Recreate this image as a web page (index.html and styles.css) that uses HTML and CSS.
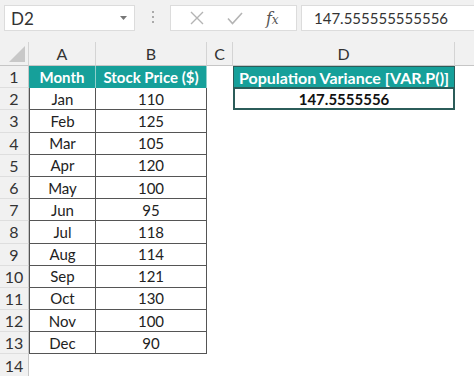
FILE: index.html
```html
<!DOCTYPE html>
<html lang="en">
<head>
  <meta charset="UTF-8" />
  <title>VAR.P example</title>
  <link rel="stylesheet" href="styles.css">
</head>
<body>

  <div class="formula-bar">
    <div class="name-box">
      <span>D2</span>
      <svg class="caret" width="7" height="4" viewBox="0 0 7 4"><polygon points="0,0 7,0 3.5,4" fill="#777"/></svg>
    </div>
    <div class="grip"><i></i><i></i><i></i></div>
    <div class="fx-buttons">
      <svg width="14" height="14" viewBox="0 0 14 14"><path d="M1 1 L13 13 M13 1 L1 13" stroke="#b4b4b4" stroke-width="1.4" fill="none"/></svg>
      <svg width="16" height="13" viewBox="0 0 16 13"><path d="M1 6.5 L5.5 11.5 L15 1" stroke="#b4b4b4" stroke-width="1.6" fill="none"/></svg>
      <span class="fx">f<small>x</small></span>
    </div>
    <div class="formula-input">147.555555555556</div>
  </div>

  <div class="sheet">
    <div class="corner"><svg width="16" height="16" viewBox="0 0 16 16"><polygon points="16,0 16,16 0,16" fill="#c8c8c8"/></svg></div>
    <div class="col-head">A</div>
    <div class="col-head">B</div>
    <div class="col-head">C</div>
    <div class="col-head">D</div>
    <div class="col-head last"></div>

    <div class="row-head">1</div>
    <div class="cell title first">Month</div>
    <div class="cell title">Stock Price ($)</div>
    <div class="cell"></div>
    <div class="cell title result-title">Population Variance [VAR.P()]</div>
    <div class="cell"></div>

    <div class="row-head">2</div>
    <div class="cell data first">Jan</div>
    <div class="cell data">110</div>
    <div class="cell"></div>
    <div class="cell result">147.5555556</div>
    <div class="cell"></div>

    <div class="row-head">3</div>
    <div class="cell data first">Feb</div>
    <div class="cell data">125</div>
    <div class="cell"></div><div class="cell"></div><div class="cell"></div>

    <div class="row-head">4</div>
    <div class="cell data first">Mar</div>
    <div class="cell data">105</div>
    <div class="cell"></div><div class="cell"></div><div class="cell"></div>

    <div class="row-head">5</div>
    <div class="cell data first">Apr</div>
    <div class="cell data">120</div>
    <div class="cell"></div><div class="cell"></div><div class="cell"></div>

    <div class="row-head">6</div>
    <div class="cell data first">May</div>
    <div class="cell data">100</div>
    <div class="cell"></div><div class="cell"></div><div class="cell"></div>

    <div class="row-head">7</div>
    <div class="cell data first">Jun</div>
    <div class="cell data">95</div>
    <div class="cell"></div><div class="cell"></div><div class="cell"></div>

    <div class="row-head">8</div>
    <div class="cell data first">Jul</div>
    <div class="cell data">118</div>
    <div class="cell"></div><div class="cell"></div><div class="cell"></div>

    <div class="row-head">9</div>
    <div class="cell data first">Aug</div>
    <div class="cell data">114</div>
    <div class="cell"></div><div class="cell"></div><div class="cell"></div>

    <div class="row-head">10</div>
    <div class="cell data first">Sep</div>
    <div class="cell data">121</div>
    <div class="cell"></div><div class="cell"></div><div class="cell"></div>

    <div class="row-head">11</div>
    <div class="cell data first">Oct</div>
    <div class="cell data">130</div>
    <div class="cell"></div><div class="cell"></div><div class="cell"></div>

    <div class="row-head">12</div>
    <div class="cell data first">Nov</div>
    <div class="cell data">100</div>
    <div class="cell"></div><div class="cell"></div><div class="cell"></div>

    <div class="row-head">13</div>
    <div class="cell data first">Dec</div>
    <div class="cell data">90</div>
    <div class="cell"></div><div class="cell"></div><div class="cell"></div>

    <div class="row-head">14</div>
    <div class="cell"></div><div class="cell"></div><div class="cell"></div><div class="cell"></div><div class="cell"></div>
  </div>

</body>
</html>
```

FILE: styles.css
```css
body {
  margin: 0;
  width: 474px;
  height: 376px;
  overflow: hidden;
  background: #fff;
  font-family: Lato, "Open Sans", sans-serif;
  color: #222;
}

/* formula bar */
.formula-bar {
  display: flex;
  align-items: flex-start;
  height: 42px;
  padding-top: 5px;
  box-sizing: border-box;
  background: #f1f1f1;
}
.name-box {
  display: flex;
  align-items: center;
  justify-content: space-between;
  margin-left: 4px;
  width: 131px;
  height: 26px;
  padding: 0 6px 0 6px;
  box-sizing: border-box;
  background: #fff;
  border: 1px solid #dcdcdc;
  font-size: 17px;
  color: #333;
}
.caret {
  margin-right: 1px;
}
.grip {
  display: flex;
  flex-direction: column;
  gap: 3px;
  width: 35px;
  align-items: center;
  padding-top: 6px;
}
.grip i {
  display: block;
  width: 2px;
  height: 2px;
  background: #aaa;
}
.fx-buttons {
  display: flex;
  align-items: center;
  justify-content: space-around;
  width: 127px;
  height: 26px;
  padding: 0 6px 0 8px;
  box-sizing: border-box;
  background: #fff;
  border: 1px solid #dcdcdc;
}
.fx {
  font-family: "DejaVu Serif", "Liberation Serif", serif;
  font-style: italic;
  font-size: 16px;
  color: #555;
}
.fx small {
  font-size: 12px;
}
.formula-input {
  flex: 1;
  height: 26px;
  margin-left: 4px;
  padding-left: 12px;
  box-sizing: border-box;
  background: #fff;
  border: 1px solid #dcdcdc;
  border-right: none;
  font-size: 15px;
  line-height: 24px;
  color: #333;
}

/* grid */
.sheet {
  display: grid;
  grid-template-columns: 29px 67px 111px 26px 222px 1fr;
  grid-template-rows: 24px;
  grid-auto-rows: 22.2px;
  font-size: 15px;
}
.corner {
  display: flex;
  align-items: flex-end;
  justify-content: flex-end;
  padding: 0 3px 3px 0;
  background: #f1f1f1;
  border-right: 1px solid #d4d4d4;
  border-bottom: 1px solid #c6c6c6;
}
.col-head {
  display: flex;
  align-items: center;
  justify-content: center;
  background: #f1f1f1;
  border-right: 1px solid #d4d4d4;
  border-bottom: 1px solid #c6c6c6;
  font-size: 16px;
  color: #333;
}
.col-head.last {
  border-right: none;
}
.row-head {
  display: flex;
  align-items: center;
  justify-content: center;
  background: #f1f1f1;
  border-right: 1px solid #c6c6c6;
  border-bottom: 1px solid #dedede;
  font-size: 16px;
  color: #333;
}
.cell {
  display: flex;
  align-items: center;
  justify-content: center;
  box-sizing: border-box;
}
.title {
  background: #16a09a;
  color: #fff;
  font-weight: bold;
  border-right: 1px solid #8fcfcb;
}
.data {
  border-right: 1px solid #555;
  border-bottom: 1px solid #555;
}
.data.first {
  border-left: 1px solid #555;
}
.result-title {
  border: 1px solid #2b5c59;
  font-size: 16px;
}
.result {
  border: 2px solid #2b5c59;
  border-top: 1px solid #2b5c59;
  font-weight: bold;
  color: #111;
}
```
